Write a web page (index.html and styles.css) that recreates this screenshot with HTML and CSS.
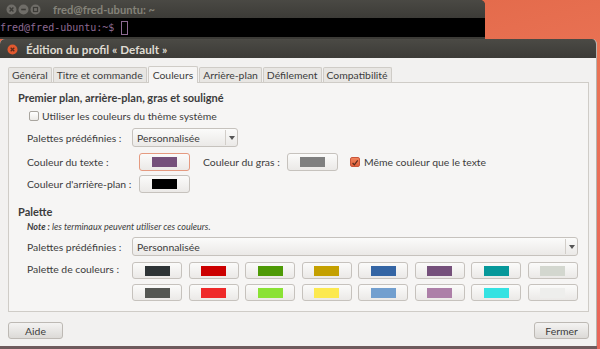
FILE: index.html
```html
<!DOCTYPE html>
<html lang="fr">
<head>
<meta charset="utf-8">
<title>Édition du profil</title>
<link rel="stylesheet" href="styles.css">
</head>
<body>
<div class="screen">
  <div class="top">
    <div class="terminal">
      <div class="term-bar">
        <span class="wbtn"><svg width="11" height="11" viewBox="0 0 11 11"><circle cx="5.5" cy="5.5" r="5" fill="#6f6d68"/><path d="M3.6 3.6 L7.4 7.4 M7.4 3.6 L3.6 7.4" stroke="#3c3b37" stroke-width="1.4"/></svg></span>
        <span class="wbtn"><svg width="11" height="11" viewBox="0 0 11 11"><circle cx="5.5" cy="5.5" r="5" fill="#6f6d68"/><path d="M3.2 5.5 H7.8" stroke="#3c3b37" stroke-width="1.6"/></svg></span>
        <span class="wbtn"><svg width="11" height="11" viewBox="0 0 11 11"><circle cx="5.5" cy="5.5" r="5" fill="#6f6d68"/><rect x="3.5" y="3.5" width="4" height="4" fill="none" stroke="#3c3b37" stroke-width="1.2"/></svg></span>
        <span class="term-title">fred@fred-ubuntu: ~</span>
      </div>
      <div class="term-body"><span class="prompt">fred@fred-ubuntu:~$ </span><span class="cursor"></span></div>
    </div>
  </div>
  <div class="dialog">
    <div class="dlg-bar">
      <span class="dlg-close"><svg width="11" height="11" viewBox="0 0 11 11"><circle cx="5.5" cy="5.5" r="5" fill="#e2592f"/><path d="M3.7 3.7 L7.3 7.3 M7.3 3.7 L3.7 7.3" stroke="#5a2a1a" stroke-width="1.3"/></svg></span>
      <span class="dlg-title">Édition du profil « Default »</span>
    </div>
    <div class="dlg-body">
      <div class="tabs">
        <span class="tab">Général</span>
        <span class="tab">Titre et commande</span>
        <span class="tab active">Couleurs</span>
        <span class="tab">Arrière-plan</span>
        <span class="tab">Défilement</span>
        <span class="tab">Compatibilité</span>
      </div>
      <div class="panel">
        <div class="heading">Premier plan, arrière-plan, gras et souligné</div>
        <div class="check-row"><span class="checkbox"></span><span>Utiliser les couleurs du thème système</span></div>
        <div class="row combo-row">
          <span class="label">Palettes prédéfinies :</span>
          <span class="combo small"><span class="combo-text">Personnalisée</span><span class="combo-arrow"></span></span>
        </div>
        <div class="row color-row">
          <span class="label">Couleur du texte :</span>
          <span class="cbtn focus"><span class="swatch" style="background:#75507b"></span></span>
          <span class="label bold-label">Couleur du gras :</span>
          <span class="cbtn"><span class="swatch" style="background:#7f7f7f"></span></span>
          <span class="checkbox checked"><svg width="10" height="10" viewBox="0 0 10 10"><path d="M2 5 L4.2 7.4 L8.4 1.8" fill="none" stroke="#5b2b1c" stroke-width="1.5"/></svg></span>
          <span class="same">Même couleur que le texte</span>
        </div>
        <div class="row color-row2">
          <span class="label">Couleur d'arrière-plan :</span>
          <span class="cbtn"><span class="swatch" style="background:#000000"></span></span>
        </div>
        <div class="heading heading2">Palette</div>
        <div class="note"><b>Note :</b> les terminaux peuvent utiliser ces couleurs.</div>
        <div class="row combo-row2">
          <span class="label">Palettes prédéfinies :</span>
          <span class="combo wide"><span class="combo-text">Personnalisée</span><span class="combo-arrow"></span></span>
        </div>
        <div class="palette-row">
          <span class="label">Palette de couleurs :</span>
          <div class="palette">
            <span class="pbtn"><span class="pswatch" style="background:#2e3436"></span></span>
            <span class="pbtn"><span class="pswatch" style="background:#cc0000"></span></span>
            <span class="pbtn"><span class="pswatch" style="background:#4e9a06"></span></span>
            <span class="pbtn"><span class="pswatch" style="background:#c4a000"></span></span>
            <span class="pbtn"><span class="pswatch" style="background:#3465a4"></span></span>
            <span class="pbtn"><span class="pswatch" style="background:#75507b"></span></span>
            <span class="pbtn"><span class="pswatch" style="background:#06989a"></span></span>
            <span class="pbtn"><span class="pswatch" style="background:#d3d7cf"></span></span>
            <span class="pbtn"><span class="pswatch" style="background:#555753"></span></span>
            <span class="pbtn"><span class="pswatch" style="background:#ef2929"></span></span>
            <span class="pbtn"><span class="pswatch" style="background:#8ae234"></span></span>
            <span class="pbtn"><span class="pswatch" style="background:#fce94f"></span></span>
            <span class="pbtn"><span class="pswatch" style="background:#729fcf"></span></span>
            <span class="pbtn"><span class="pswatch" style="background:#ad7fa8"></span></span>
            <span class="pbtn"><span class="pswatch" style="background:#34e2e2"></span></span>
            <span class="pbtn"><span class="pswatch" style="background:#eeeeec"></span></span>
          </div>
        </div>
      </div>
      <div class="actions">
        <span class="btn">Aide</span>
        <span class="btn">Fermer</span>
      </div>
    </div>
  </div>
  <div class="under"></div>
</div>
</body>
</html>
```

FILE: styles.css
```css
* { box-sizing: border-box; }
html, body { margin: 0; padding: 0; }
body {
  width: 600px;
  height: 349px;
  overflow: hidden;
  background: linear-gradient(165deg, #dc6140 0%, #ea7355 45%, #e9655a 100%);
  font-family: Lato, "Open Sans", sans-serif;
  font-size: 10.4px;
  color: #3c3c3c;
}
.screen { display: flex; flex-direction: column; height: 349px; }
.top { height: 39px; display: flex; }
.terminal {
  width: 485px;
  height: 39px;
  border-top-right-radius: 5px;
  overflow: hidden;
  background: #3c3b37;
  display: flex;
  flex-direction: column;
}
.term-bar {
  height: 18px;
  display: flex;
  align-items: center;
  padding-left: 6px;
  gap: 1px;
  background: linear-gradient(#4a4944, #3c3b37);
}
.wbtn { display: flex; width: 11px; height: 11px; }
.term-title {
  margin-left: 11px;
  color: #858379;
  font-weight: bold;
  font-size: 11.2px;
}
.term-body {
  height: 19px;
  margin-bottom: 2px;
  background: #000;
  font-family: "DejaVu Sans Mono", monospace;
  font-size: 10px;
  color: #8d6a92;
  display: flex;
  align-items: center;
  white-space: pre;
}
.cursor {
  width: 7px;
  height: 14px;
  border: 1px solid #8d6a92;
  margin-left: 1px;
}
.dialog {
  width: 597px;
  height: 307px;
  border-top-right-radius: 5px;
  border-top-left-radius: 5px;
  overflow: hidden;
  display: flex;
  flex-direction: column;
  background: #f2f1f0;
  border-right: 1px solid #b9b3ae;
}
.dlg-bar {
  height: 19px;
  flex: none;
  display: flex;
  align-items: center;
  padding-left: 7px;
  background: linear-gradient(#4b4a45, #3c3b37);
}
.dlg-close { display: flex; width: 11px; height: 11px; margin-top: 1px; }
.dlg-title {
  margin-left: 8px;
  color: #dfdbd2;
  font-weight: bold;
  font-size: 11.7px;
}
.dlg-body {
  flex: 1;
  display: flex;
  flex-direction: column;
  padding: 8px 7px 0 8px;
}
.tabs {
  height: 16px;
  display: flex;
  align-items: flex-end;
  gap: 1px;
}
.tab {
  height: 15px;
  padding: 0 3px;
  display: flex;
  align-items: center;
  background: #e8e6e3;
  border: 1px solid #cfccc7;
  border-bottom: none;
  border-radius: 2px 2px 0 0;
  color: #3c3c3c;
  white-space: nowrap;
}
.tab.active {
  height: 17px;
  margin-bottom: -1px;
  background: #f6f5f4;
  padding: 0 4px;
  position: relative;
}
.panel {
  height: 230px;
  border: 1px solid #cfccc7;
  background: #f6f5f4;
  padding: 8px 0 0 9px;
  display: flex;
  flex-direction: column;
}
.heading { height: 14px; line-height: 14px; font-weight: bold; font-size: 11px; }
.check-row {
  height: 14px;
  margin-top: 4px;
  padding-left: 11px;
  display: flex;
  align-items: center;
  gap: 3px;
}
.checkbox {
  width: 10px;
  height: 10px;
  border: 1px solid #a9a59f;
  border-radius: 2px;
  background: linear-gradient(#ffffff, #eceae7);
  display: flex;
  flex: none;
}
.checkbox.checked {
  background: linear-gradient(#f0845c, #e0603a);
  border-color: #c9553a;
  margin-left: 12px;
}
.row { display: flex; align-items: center; padding-left: 9px; }
.label { width: 105px; flex: none; white-space: nowrap; }
.combo-row { height: 19px; margin-top: 5px; }
.combo {
  height: 19px;
  display: flex;
  align-items: center;
  border: 1px solid #c6c2bd;
  border-radius: 3px;
  background: linear-gradient(#fbfbfa, #ebe9e7);
  padding-left: 4px;
}
.combo.small { width: 106px; }
.combo.wide { width: 446px; }
.combo-text { flex: 1; }
.combo-arrow {
  width: 12px;
  height: 15px;
  border-left: 1px solid #d2cec9;
  position: relative;
}
.combo-arrow::after {
  content: "";
  position: absolute;
  left: 3px;
  top: 6px;
  border-left: 3px solid transparent;
  border-right: 3px solid transparent;
  border-top: 4px solid #555;
}
.color-row { height: 18px; margin-top: 6px; }
.color-row2 { height: 18px; margin-top: 4px; }
.cbtn {
  width: 51px;
  height: 18px;
  margin-left: 7px;
  border: 1px solid #c6c2bd;
  border-radius: 3px;
  background: linear-gradient(#fbfbfa, #ebe9e7);
  display: flex;
  align-items: center;
  justify-content: center;
  flex: none;
}
.cbtn.focus { border-color: #e59a80; }
.swatch { width: 25px; height: 10px; }
.bold-label { width: 77px; margin-left: 13px; }
.same { margin-left: 4px; white-space: nowrap; }
.heading2 { margin-top: 12px; }
.note {
  height: 12px;
  line-height: 12px;
  margin-top: 2px;
  padding-left: 9px;
  font-size: 9px;
  font-style: italic;
}
.combo-row2 { height: 19px; margin-top: 4px; }
.palette-row { display: flex; padding-left: 9px; margin-top: 6px; }
.palette-row .label { padding-top: 1px; }
.palette {
  width: 446px;
  display: grid;
  grid-template-columns: repeat(8, 1fr);
  column-gap: 6.57px;
  row-gap: 5px;
}
.pbtn {
  height: 17px;
  border: 1px solid #c6c2bd;
  border-radius: 3px;
  background: linear-gradient(#fbfbfa, #ebe9e7);
  display: flex;
  align-items: center;
  justify-content: center;
}
.pswatch { width: 25px; height: 10px; }
.actions {
  margin-top: 10px;
  display: flex;
  justify-content: space-between;
}
.btn {
  width: 55px;
  height: 17px;
  border: 1px solid #bdb9b4;
  border-radius: 3px;
  background: linear-gradient(#f4f3f2, #dcdad7);
  display: flex;
  align-items: center;
  justify-content: center;
  color: #3c3c3c;
}
.under { flex: 1; background: #6e5a5c; width: 597px; }
```
